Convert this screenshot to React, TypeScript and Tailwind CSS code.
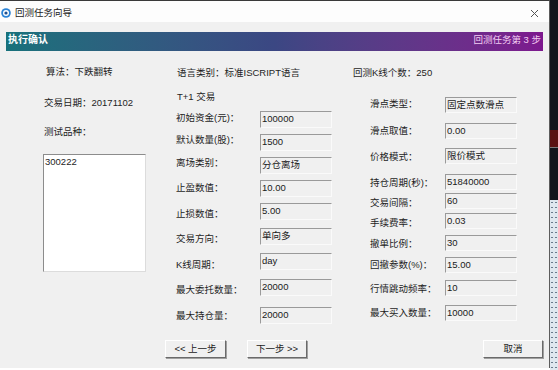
import React from "react";

const font = { fontFamily: '"Liberation Sans","Noto Sans CJK SC",sans-serif' };

function Box({ v, h = "h-[17px]" }: { v: string; h?: string }) {
  return (
    <div className={`w-[72px] ${h} border-t border-l border-t-[#9a9a9a] border-l-[#9a9a9a] border-r border-b border-r-[#fafafa] border-b-[#fafafa] bg-[#f0f0f0] pl-[1px] leading-[14px] text-[#1a1a1a]`}>
      {v}
    </div>
  );
}

const midRows: [string, string, number, string][] = [
  ["初始资金(元)：", "100000", 23, "pt-[1px]"],
  ["默认数量(股)：", "1500", 23, "pt-[0px]"],
  ["离场类别：", "分仓离场", 23, "pt-[0px]"],
  ["止盈数值：", "10.00", 23, "pt-[2px]"],
  ["止损数值：", "5.00", 25, "pt-[5px]"],
  ["交易方向：", "单向多", 25, "pt-[5px]"],
  ["K线周期：", "day", 26, "pt-[6px]"],
  ["最大委托数量：", "20000", 28, "pt-[5px]"],
  ["最大持仓量：", "20000", 22, "pt-[3px]"],
];

const rightRows: [string, string, number, string][] = [
  ["滑点类型：", "固定点数滑点", 26, "pt-[1px]"],
  ["滑点取值：", "0.00", 25, "pt-[2px]"],
  ["价格模式：", "限价模式", 26, "pt-[3px]"],
  ["持仓周期(秒)：", "51840000", 19, "pt-[3px]"],
  ["交易间隔：", "60", 20, "pt-[4px]"],
  ["手续费率：", "0.03", 22, "pt-[4px]"],
  ["撤单比例：", "30", 22, "pt-[3px]"],
  ["回撤参数(%)：", "15.00", 23, "pt-[2px]"],
  ["行情跳动频率：", "10", 25, "pt-[3px]"],
  ["最大买入数量：", "10000", 20, "pt-[2px]"],
];

function Btn({ label, w }: { label: string; w: string }) {
  return (
    <div className={`${w} h-[18px] flex items-center justify-center border border-t-[#ffffff] border-l-[#ffffff] border-r-[#6a6a6a] border-b-[#6a6a6a] bg-[#f0f0f0] shadow-[1px_1px_0_#a0a0a0] text-[#1a1a1a]`}>
      {label}
    </div>
  );
}

export default function App() {
  return (
    <div className="w-[558px] h-[370px] flex bg-white overflow-hidden text-[9.5px] leading-[12px] text-[#1e1e1e]" style={font}>
      <div className="w-[550px] h-[368px] flex flex-col border-r border-r-[#5c5c5c] border-t border-t-[#3a3a3a] bg-[#f0f0f0]">
        {/* title bar */}
        <div className="h-[21px] bg-[#fdfdfd] flex items-center shrink-0">
          <svg width="10" height="10" viewBox="0 0 10 10" className="ml-[1px] mt-[2px]">
            <circle cx="5" cy="5" r="4.8" fill="#2b83d6" />
            <circle cx="5" cy="5" r="3" fill="#ffffff" />
            <circle cx="5" cy="5" r="1.6" fill="#1d4f8f" />
          </svg>
          <span className="ml-[4px] mt-[2px] text-[9.5px] text-[#222]">回测任务向导</span>
          <svg width="9" height="9" viewBox="0 0 9 9" className="ml-auto mr-[10px] mt-[4px]">
            <path d="M1 1 L8 8 M8 1 L1 8" stroke="#555" strokeWidth="1" />
          </svg>
        </div>
        {/* banner */}
        <div className="mt-[10px] mx-[6px] h-[19px] shrink-0 bg-linear-to-r from-[#17717b] via-[#3b4783] to-[#7d188e] flex items-start justify-between px-[2px] pt-[2px]">
          <span className="font-bold text-white text-[10px]">执行确认</span>
          <span className="text-[#f3cdf3] text-[9.5px]">回测任务第 3 步</span>
        </div>
        {/* content */}
        <div className="h-[289px] flex shrink-0">
          {/* left column */}
          <div className="ml-[43px] w-[133px] flex flex-col">
            <div className="mt-[15px] pl-[3px]">算法：下跌翻转</div>
            <div className="mt-[19px] pl-[1px]">交易日期：20171102</div>
            <div className="mt-[17px] pl-[1px]">测试品种：</div>
            <div className="mt-[16px] w-[103px] h-[118px] bg-white border border-t-[#8c8c8c] border-l-[#8c8c8c] border-r-[#dcdcdc] border-b-[#dcdcdc] pl-[1px] pt-[1px]">
              300222
            </div>
          </div>
          {/* middle column */}
          <div className="w-[177px] flex flex-col">
            <div className="mt-[16px] pl-[1px]">语言类别：标准ISCRIPT语言</div>
            <div className="mt-[12px] pl-[1px]">T+1 交易</div>
            <div className="mt-[8px] flex flex-col">
              {midRows.map(([l, v, h, pt]) => (
                <div key={l} className="flex items-start" style={{ height: h }}>
                  <div className={`w-[84px] ${pt}`}>{l}</div>
                  <Box v={v} />
                </div>
              ))}
            </div>
          </div>
          {/* right column */}
          <div className="flex flex-col">
            <div className="mt-[16px]">回测K线个数：250</div>
            <div className="mt-[18px] flex flex-col ml-[17px]">
              {rightRows.map(([l, v, h, pt]) => (
                <div key={l} className="flex items-start" style={{ height: h }}>
                  <div className={`w-[75px] ${pt}`}>{l}</div>
                  <Box v={v} h="h-[16px]" />
                </div>
              ))}
            </div>
          </div>
        </div>
        {/* buttons */}
        <div className="flex items-start pl-[165px] pr-[6px]">
          <Btn label="<< 上一步" w="w-[61px]" />
          <div className="ml-[21px]">
            <Btn label="下一步 >>" w="w-[60px]" />
          </div>
          <div className="ml-auto">
            <Btn label="取消" w="w-[60px]" />
          </div>
        </div>
      </div>
      {/* background strip */}
      <div className="w-[8px] h-[370px] flex flex-col">
        <div className="h-[130px] bg-[#12161c]" />
        <div className="h-[17px] bg-[#5a1212]" />
        <div className="h-[1px] bg-[#7a7a7a]" />
        <div className="h-[52px] bg-[#12161c]" />
        <div className="flex-1 bg-[#dfe7ef] bg-[radial-gradient(#6a7b8c_0.6px,transparent_0.8px)] bg-[length:4px_5px]" />
      </div>
    </div>
  );
}
